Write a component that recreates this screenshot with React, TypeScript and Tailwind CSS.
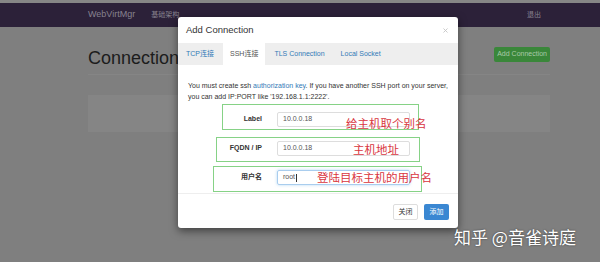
import { X } from 'lucide-react';

const sans = { fontFamily: '"Liberation Sans", "Noto Sans CJK SC", Arial, sans-serif' };

const tabs = [
  { label: 'TCP连接', active: false },
  { label: 'SSH连接', active: true },
  { label: 'TLS Connection', active: false },
  { label: 'Local Socket', active: false }
];

const fields = [
  { label: 'Label', value: '10.0.0.18', focused: false },
  { label: 'FQDN / IP', value: '10.0.0.18', focused: false },
  { label: '用户名', value: 'root', focused: true }
];

const notes = [
  { text: '给主机取个别名', box: 'left-[44px] top-[87px] w-[197px] h-[26px]', pos: 'left-[168px] top-[98px]' },
  { text: '主机地址', box: 'left-[38px] top-[120px] w-[204px] h-[25px]', pos: 'left-[175px] top-[124px]' },
  { text: '登陆目标主机的用户名', box: 'left-[35px] top-[149px] w-[209px] h-[26px]', pos: 'left-[139px] top-[152px]' }
];

const Page = () => (
  <div className="h-[262px] w-[600px] bg-[#7f7f7f]">
    <div className="h-[3px] bg-[#868686]" />
    <div className="flex h-[24px] items-center bg-[#2c2139] text-[#87818f]">
      <span className="ml-[88px] text-[9px]">WebVirtMgr</span>
      <span className="ml-[16px] text-[7px]">基础架构</span>
      <span className="ml-auto mr-[59px] text-[7px]">退出</span>
    </div>
    <div className="ml-[88px] w-[462px]">
      <div className="flex h-[48px] items-start justify-between border-b border-[#858585]">
        <h1 className="mt-[21px] text-[18px] leading-[20px] text-[#1c1c1c]">Connections</h1>
        <button className="mt-[20px] h-[15px] rounded-[2px] bg-[#3a873a] px-[3px] text-[7px] text-[#a9c9a9]">
          Add Connection
        </button>
      </div>
      <div className="mt-[20px] h-[37px] bg-[#858585]" />
    </div>
  </div>
);

const Modal = () => (
  <div className="absolute left-[178px] top-[17px] flex h-[211px] w-[280px] flex-col rounded-[3px] bg-white shadow-[0_3px_9px_rgba(0,0,0,0.5)]">
    <div className="flex h-[26px] items-center justify-between px-[8px]">
      <span className="text-[9.5px] text-[#333]">Add Connection</span>
      <X className="mr-[1px] h-[7px] w-[7px] text-[#c4c4c4]" strokeWidth={3} />
    </div>
    <div className="flex h-[22px] gap-[2px] bg-[#eeeeee] pl-[1px]">
      {tabs.map((tab) => (
        <div
          key={tab.label}
          className={
            tab.active
              ? 'flex items-center bg-white px-[7px] text-[7px] text-[#555]'
              : 'flex items-center px-[7px] text-[7px] text-[#337ab7]'
          }
        >
          {tab.label}
        </div>
      ))}
    </div>
    <div className="px-[10px] pt-[15px]">
      <p className="text-[7px] leading-[11px] text-[#333]">
        You must create ssh <span className="text-[#337ab7]">authorization key</span>. If you have another SSH port
        on your server,
        <br />
        you can add IP:PORT like '192.168.1.1:2222'.
      </p>
      <div className="mt-[10px] flex flex-col gap-[14px]">
        {fields.map((field) => (
          <div key={field.label} className="flex items-center">
            <label className="w-[74px] text-right text-[7px] font-bold text-[#333]">{field.label}</label>
            <div
              className={
                field.focused
                  ? 'ml-[15px] flex h-[15px] w-[133px] items-center rounded-[2px] border border-[#a9cdee] px-[5px] text-[7px] text-[#555] shadow-[0_0_3px_rgba(102,175,233,0.5)]'
                  : 'ml-[15px] flex h-[15px] w-[133px] items-center rounded-[2px] border border-[#dddddd] px-[5px] text-[7px] text-[#555]'
              }
            >
              {field.value}
              {field.focused && <span className="ml-[1px] h-[8px] w-px bg-[#333]" />}
            </div>
          </div>
        ))}
      </div>
    </div>
    <div className="mt-auto flex h-[35px] justify-end gap-[6px] border-t border-[#eeeeee] pr-[9px] pt-[10px]">
      <button className="h-[16px] w-[25px] rounded-[2px] border border-[#dddddd] bg-white text-[7px] text-[#333]">
        关闭
      </button>
      <button className="h-[16px] w-[25px] rounded-[2px] bg-[#3a87d2] text-[7px] text-white">添加</button>
    </div>
    {notes.map((note) => (
      <div key={note.text}>
        <div className={`absolute border-[1.5px] border-[#86d286] ${note.box}`} />
        <span
          className={`absolute whitespace-nowrap text-[11.5px] leading-[16px] text-[#d9363e] ${note.pos}`}
          style={{ fontFamily: '"Noto Sans CJK SC", sans-serif' }}
        >
          {note.text}
        </span>
      </div>
    ))}
  </div>
);

export default function App() {
  return (
    <div className="relative h-[262px] w-[600px] overflow-hidden" style={sans}>
      <Page />
      <Modal />
      <span
        className="absolute left-[454px] top-[226px] whitespace-nowrap text-[17px] leading-[22px] text-white [text-shadow:0_0_2px_rgba(0,0,0,0.6)]"
        style={{ fontFamily: '"Noto Sans CJK SC", sans-serif' }}
      >
        知乎 @音雀诗庭
      </span>
    </div>
  );
}
